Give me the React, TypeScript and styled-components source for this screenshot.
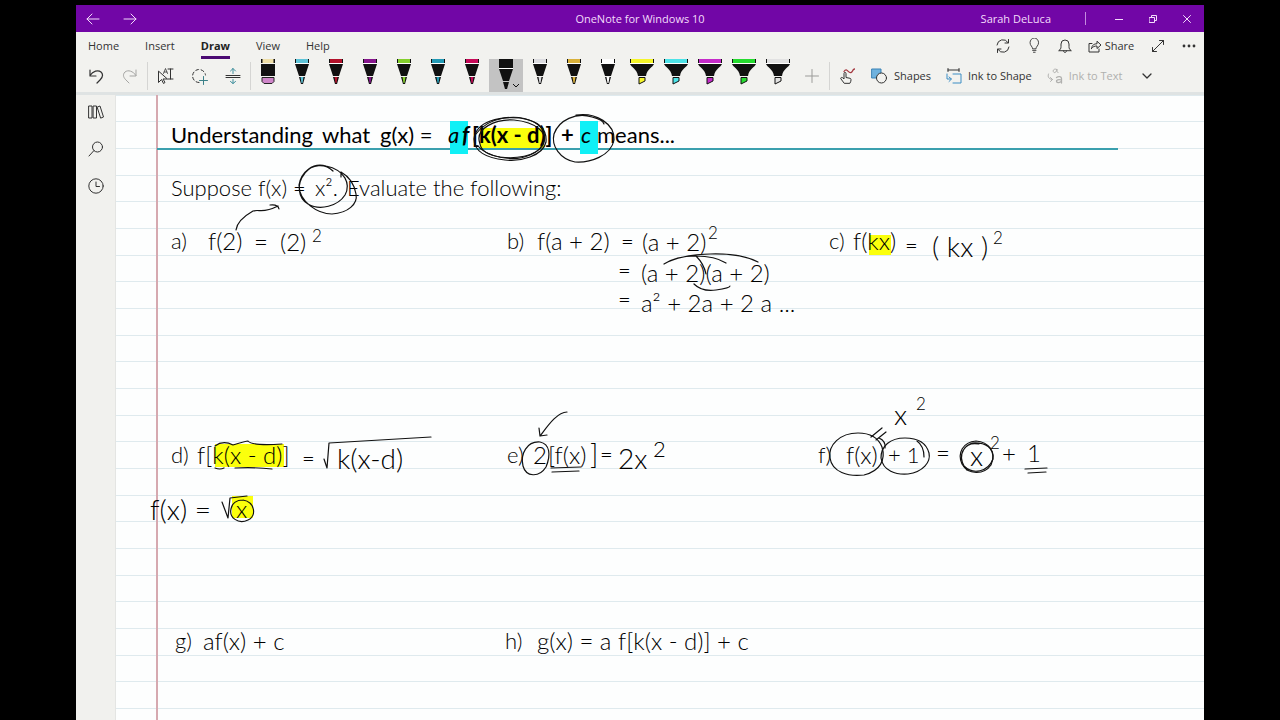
import React from "react";
import styled, { createGlobalStyle, css } from "styled-components";

const GlobalStyle = createGlobalStyle`
  * { box-sizing: border-box; }
  body { margin: 0; background: #000; }
  button { font: inherit; color: inherit; background: none; border: 0; padding: 0; margin: 0; }
`;

const uiFont = `"Open Sans", "Noto Sans", sans-serif`;
const noteFont = `Lato, "Open Sans", sans-serif`;

/* ---------- window frame ---------- */

const Screen = styled.div`
  min-height: 100vh;
  padding: 5px 76px 0;
  background: #000;
  display: flex;
  flex-direction: column;
  font-family: ${uiFont};
  font-size: 11px;
  color: #333;
`;

const TitleBar = styled.header`
  display: grid;
  grid-template-columns: 1fr auto 1fr;
  align-items: center;
  height: 27px;
  background: #7106a6;
  color: #f3dcfb;
`;

const NavButtons = styled.nav`
  display: flex;
  gap: 21px;
  padding-left: 9px;
`;

const IconButton = styled.button`
  display: flex;
  align-items: center;
  justify-content: center;
  width: 16px;
  height: 24px;
`;

const WindowControls = styled.div`
  display: flex;
  align-items: center;
  justify-content: flex-end;
`;

const TitleDivider = styled.span`
  width: 1px;
  height: 13px;
  margin: 0 16px 0 34px;
  background: #c48be0;
`;

const WindowButton = styled(IconButton)`
  width: 34px;
`;

const Ribbon = styled.div`
  background: #f2f2ef;
  border-bottom: 3px solid #dfe3e3;
`;

const TabRow = styled.div`
  display: flex;
  align-items: stretch;
  justify-content: space-between;
  height: 27px;
  padding-left: 12px;
`;

const Tabs = styled.nav`
  display: flex;
  gap: 26px;
`;

const Tab = styled.button<{ $active?: boolean }>`
  display: flex;
  align-items: center;
  border-bottom: 3px solid transparent;
  padding-top: 3px;
  ${(p) =>
    p.$active &&
    css`
      font-weight: 700;
      color: #222;
      border-bottom-color: #4b0a72;
    `}
`;

const TabActions = styled.div`
  display: flex;
  align-items: center;
`;

const ActionButton = styled.button<{ $wide?: boolean }>`
  display: flex;
  align-items: center;
  justify-content: center;
  gap: 3px;
  width: ${(p) => (p.$wide ? "62px" : "31px")};
  height: 24px;
`;

const ToolRow = styled.div`
  display: flex;
  height: 33px;
  padding-left: 3px;
`;

const Tool = styled.button<{ $selected?: boolean }>`
  position: relative;
  display: flex;
  align-items: center;
  justify-content: center;
  flex: none;
  width: 34px;
  height: 33px;
  background: ${(p) => (p.$selected ? "#c3c3c3" : "transparent")};
`;

const PenTool = styled(Tool)`
  align-items: flex-start;
`;

const SelectedMark = styled.svg`
  position: absolute;
  right: 3px;
  bottom: 3px;
`;

const Divider = styled.span`
  flex: none;
  width: 1px;
  height: 28px;
  margin-top: 3px;
  background: #d5d5d3;
`;

const LabelTool = styled.button<{ $disabled?: boolean }>`
  display: flex;
  align-items: center;
  gap: 6px;
  height: 33px;
  margin-left: 7px;
  margin-right: 8px;
  color: ${(p) => (p.$disabled ? "#b0b0ae" : "#333")};
`;

/* ---------- page ---------- */

const Body = styled.div`
  display: flex;
  flex: 1;
`;

const Rail = styled.aside`
  display: flex;
  flex-direction: column;
  align-items: center;
  gap: 13px;
  flex: none;
  width: 40px;
  padding-top: 5px;
  background: #f1f1ee;
  border-right: 1px solid #e4e5e3;
`;

const Canvas = styled.main`
  position: relative;
  flex: 1;
  min-height: 625px;
  overflow: hidden;
  background:
    linear-gradient(#d6a9b0, #d6a9b0) 40px 0 / 2px 100% no-repeat,
    linear-gradient(
        to bottom,
        #dfeaee 0 1px,
        transparent 1px 26px,
        #dfeaee 26px 27px,
        transparent 27px 53px,
        #dfeaee 53px 54px,
        transparent 54px 80px
      )
      0 0 / 100% 80px repeat-y,
    #fdfefe;
`;

const TitleRule = styled.div`
  position: absolute;
  left: 41px;
  right: 86px;
  top: 53px;
  height: 2px;
  background: #3aa0ae;
`;

const Highlight = styled.span<{ $x: number; $y: number; $w: number; $h: number; $c: string }>`
  position: absolute;
  left: ${(p) => p.$x}px;
  top: ${(p) => p.$y}px;
  width: ${(p) => p.$w}px;
  height: ${(p) => p.$h}px;
  background: ${(p) => p.$c};
`;

type Size = "small" | "normal" | "large" | "huge";
const sizes: Record<Size, number> = { small: 17, normal: 22, large: 24, huge: 28 };

const Note = styled.span<{ $x: number; $y: number; $size?: Size; $weight?: number; $italic?: boolean }>`
  position: absolute;
  left: ${(p) => p.$x}px;
  top: ${(p) => p.$y}px;
  white-space: pre;
  font-family: ${noteFont};
  font-size: ${(p) => sizes[p.$size ?? "normal"]}px;
  font-weight: ${(p) => p.$weight ?? 300};
  font-style: ${(p) => (p.$italic ? "italic" : "normal")};
  line-height: 26px;
  color: #000;
`;

const InkLayer = styled.svg`
  position: absolute;
  left: 0;
  top: 0;
  fill: none;
  stroke: #111;
  stroke-width: 1.2;
  stroke-linecap: round;
  stroke-linejoin: round;
`;

/* ---------- icons ---------- */

const Icon = ({ children, w = 16, h = 16, sw = 1 }: { children: React.ReactNode; w?: number; h?: number; sw?: number }) => (
  <svg width={w} height={h} viewBox={`0 0 ${w} ${h}`} fill="none" stroke="currentColor" strokeWidth={sw} strokeLinecap="round" strokeLinejoin="round" aria-hidden="true">
    {children}
  </svg>
);

const Pen = ({ color, selected }: { color: string; selected?: boolean }) => (
  <svg width="16" height={selected ? 31 : 26} viewBox={selected ? "0 -5 16 31" : "0 0 16 26"} aria-hidden="true">
    <rect x="1" y={selected ? -5 : 0} width="14" height={selected ? 9 : 4} fill="#111" />
    {!selected && <rect x="2" y="0" width="12" height="4" fill={color} />}
    <rect x="1" y="4" width="14" height="1" fill="#fff" />
    <path d="M1 5h14l-4 12H5z" fill="#111" />
    <path d="M5 18h6l-2 7H7z" fill="#111" />
    {!selected && <path d="M6.5 18h3l-1 6h-1z" fill={color} />}
  </svg>
);

const Highlighter = ({ color }: { color: string }) => (
  <svg width="26" height="26" viewBox="0 0 26 26" aria-hidden="true">
    <rect x="1" y="0" width="24" height="4" fill="#111" />
    <rect x="2" y="0" width="22" height="4" fill={color} />
    <rect x="1" y="4" width="24" height="1" fill="#fff" />
    <path d="M1 5h24c-1 3-7 5-8 12H9C8 10 2 8 1 5z" fill="#111" />
    <path d="M10 18.500h6v3.500l-6 3z" fill={color} stroke="#111" strokeWidth="1" />
  </svg>
);

const Eraser = () => (
  <svg width="16" height="26" viewBox="0 0 16 26" aria-hidden="true">
    <rect x="1" y="0" width="14" height="4" fill="#111" />
    <rect x="2.500" y="0" width="11" height="4" fill="#efdfa8" />
    <rect x="1" y="5" width="14" height="12" fill="#111" />
    <path d="M2 18.500h12v4l-2 2H4l-2-2z" fill="#cf86c9" stroke="#222" />
  </svg>
);

const pens = ["#5fc4d8", "#b3122b", "#86168c", "#84cf2c", "#239ab5", "#c70a58"];
const pensAfter = ["#dcdce0", "#d9b13a", "#ffffff"];
const highlighters = ["#f5f52a", "#4de3e8", "#c52bc9", "#25db2f", "#e2e2e2"];

/* ---------- page content ---------- */

const yellow = "#fbff0c";
const cyan = "#10f0f6";

const highlights = [
  { x: 334, y: 26, w: 18, h: 33, c: cyan },
  { x: 364, y: 33, w: 64, h: 20, c: yellow },
  { x: 464, y: 26, w: 18, h: 33, c: cyan },
  { x: 753, y: 140, w: 22, h: 20, c: yellow },
  { x: 99, y: 349, w: 69, h: 23, c: yellow },
  { x: 116, y: 401, w: 21, h: 22, c: yellow },
];

type Item = { t: string; x: number; y: number; s?: Size; w?: number; i?: boolean };

const heading: Item[] = [
  { t: "Understanding", x: 55, y: 27, w: 400 },
  { t: "what", x: 206, y: 27, w: 400 },
  { t: "g(x) =", x: 264, y: 27, w: 400 },
  { t: "a", x: 332, y: 27, w: 400, i: true },
  { t: "f", x: 346, y: 27, w: 700, i: true },
  { t: "[k(x - d)]", x: 356, y: 27, w: 700 },
  { t: "+", x: 445, y: 27, w: 700 },
  { t: "c", x: 465, y: 27, w: 400, i: true },
  { t: "means...", x: 481, y: 27, w: 400 },
];

const typed: Item[] = [
  { t: "Suppose f(x) =", x: 55, y: 80 },
  { t: "x².", x: 199, y: 80 },
  { t: "Evaluate the following:", x: 231, y: 80 },
  { t: "a)", x: 55, y: 133 },
  { t: "f(2)", x: 92, y: 133, s: "large" },
  { t: "b)", x: 391, y: 133 },
  { t: "f(a + 2)", x: 421, y: 133, s: "large" },
  { t: "c)", x: 713, y: 133 },
  { t: "f(kx)", x: 737, y: 133, s: "large" },
  { t: "d)", x: 55, y: 347 },
  { t: "f[k(x - d)]", x: 81, y: 347, s: "large" },
  { t: "e)", x: 391, y: 347 },
  { t: "2", x: 417, y: 347, s: "large" },
  { t: "[f(x)", x: 432, y: 347, s: "large" },
  { t: "f)", x: 702, y: 347 },
  { t: "f(x)", x: 730, y: 347, s: "large" },
  { t: "+ 1", x: 772, y: 347 },
  { t: "g)", x: 59, y: 533 },
  { t: "af(x) + c", x: 87, y: 533, s: "large" },
  { t: "h)", x: 389, y: 533 },
  { t: "g(x) = a f[k(x - d)] + c", x: 421, y: 533, s: "large" },
];

const handwriting: Item[] = [
  { t: "=", x: 138, y: 134, s: "large" },
  { t: "(2)", x: 164, y: 134, s: "large" },
  { t: "2", x: 196, y: 128, s: "small" },
  { t: "=", x: 505, y: 133 },
  { t: "(a + 2)", x: 526, y: 134, s: "large" },
  { t: "2", x: 592, y: 125, s: "small" },
  { t: "=", x: 502, y: 162 },
  { t: "(a + 2)(a + 2)", x: 525, y: 165, s: "large" },
  { t: "=", x: 502, y: 191 },
  { t: "a² + 2a + 2 a ...", x: 525, y: 195, s: "large" },
  { t: "=", x: 789, y: 137 },
  { t: "( kx )", x: 816, y: 138, s: "huge" },
  { t: "2", x: 877, y: 130, s: "small" },
  { t: "=", x: 186, y: 350 },
  { t: "k(x-d)", x: 221, y: 350, s: "huge" },
  { t: "f(x) =", x: 34, y: 401, s: "huge" },
  { t: "x", x: 120, y: 401, s: "large" },
  { t: "]", x: 474, y: 345, s: "huge" },
  { t: "=", x: 484, y: 346 },
  { t: "2x", x: 502, y: 350, s: "huge" },
  { t: "2", x: 537, y: 341, s: "normal" },
  { t: "x", x: 778, y: 306, s: "huge" },
  { t: "2", x: 800, y: 296, s: "small" },
  { t: "=", x: 820, y: 345, s: "large" },
  { t: "x", x: 854, y: 347, s: "huge" },
  { t: "2", x: 874, y: 335, s: "small" },
  { t: "+", x: 886, y: 345, s: "large" },
  { t: "1", x: 911, y: 345, s: "large" },
];

const strokes = [
  // loops round k(x - d) in the title
  "M474 139C476 121 500 116 520 118 540 121 547 130 546 142 543 156 520 162 505 160 486 158 474 151 474 139",
  "M480 144C474 128 496 119 514 120 536 122 549 133 543 145 536 157 514 159 500 157 488 155 481 150 480 144",
  "M476 134C488 117 516 113 534 122 552 132 544 150 530 155 512 163 486 156 478 146",
  // loop round + c
  "M576 115C596 112 615 124 614 140 611 156 590 163 575 162 560 159 551 146 554 134 559 120 576 112 592 117Q603 120 604 124",
  // loops round x²
  "M333 171C325 163 312 164 305 173 296 184 298 198 308 204 320 211 338 206 345 195 351 184 345 170 326 166 313 162 301 172 299 185 299 202 318 214 332 214 348 213 358 204 356 194 354 182 348 176 341 172V177",
  // arrow from f(2) up to x²
  "M236 230C237 222 246 215 253 211 260 209 262 214 278 206M270 205Q278 204 279 209",
  // expansion arcs
  "M664 264C685 252 735 250 758 262M664 264C680 253 712 254 726 263M696 256Q704 264 706 274M694 284Q702 292 716 290T730 286",
  // brace and underlines in d)
  "M215 446Q223 440 233 445Q246 441 248 441Q252 446 282 444M215 468Q220 470 224 468M235 468Q255 467 272 469",
  // radicals
  "M324 459L327 468 329 443 431 437",
  "M222 502L228 518 230 498 247 496",
  "M243 500C255 502 257 516 248 520 238 525 229 517 231 509 232 503 237 500 243 500",
  // e) arrow, loop and underlines
  "M567 412C557 412 547 427 540 436M539 428L540 436 547 435",
  "M540 442C527 441 520 454 523 466 526 477 539 478 546 467 551 455 550 444 540 442",
  "M551 468L581 467M552 472L579 471",
  // f) loops, ticks and underlines
  "M858 433C840 433 828 445 830 458 832 472 848 477 864 475 880 471 886 460 882 447 878 437 870 433 858 433",
  "M905 438C890 438 881 446 881 458 883 471 896 475 908 474 923 472 931 462 929 453 926 442 916 438 905 438",
  "M871 437L882 428M876 440L886 432M879 438Q886 441 885 448M917 441Q924 446 924 457",
  "M976 441C963 442 957 453 962 464 968 475 984 475 991 465 997 451 988 442 976 441",
  "M979 444C964 441 958 455 964 466 973 475 988 472 993 459 994 448 986 442 972 443 960 448 958 460 967 470",
  "M1025 469L1047 468M1028 473L1046 472",
];

const renderItem = (n: Item, index: number) => (
  <Note key={index} $x={n.x} $y={n.y} $size={n.s} $weight={n.w} $italic={n.i}>
    {n.t}
  </Note>
);

const Heading = styled.h1`
  margin: 0;
`;

export default function App() {
  return (
    <>
      <GlobalStyle />
      <Screen>
        <TitleBar>
          <NavButtons>
            <IconButton aria-label="Back"><Icon><path d="M14 8H2M7 3L2 8l5 5" /></Icon></IconButton>
            <IconButton aria-label="Forward"><Icon><path d="M2 8h12M9 3l5 5-5 5" /></Icon></IconButton>
          </NavButtons>
          <span>OneNote for Windows 10</span>
          <WindowControls>
            <span>Sarah DeLuca</span>
            <TitleDivider />
            <WindowButton aria-label="Minimize"><Icon w={8} h={8}><path d="M0 4.500h8" /></Icon></WindowButton>
            <WindowButton aria-label="Restore"><Icon w={8} h={8}><path d="M.5 2.500h5v5h-5zM2.500 2.500v-2h5v5h-2" /></Icon></WindowButton>
            <WindowButton aria-label="Close"><Icon w={8} h={8}><path d="M.5.5l7 7M7.500.5l-7 7" /></Icon></WindowButton>
          </WindowControls>
        </TitleBar>

        <Ribbon>
          <TabRow>
            <Tabs>
              <Tab>Home</Tab>
              <Tab>Insert</Tab>
              <Tab $active>Draw</Tab>
              <Tab>View</Tab>
              <Tab>Help</Tab>
            </Tabs>
            <TabActions>
              <ActionButton aria-label="Sync"><Icon><path d="M2 7a6 6 0 0 1 11-2.500M14 9a6 6 0 0 1-11 2.500M13.500 1.500v3.500H10M2.500 14.500V11H6" /></Icon></ActionButton>
              <ActionButton aria-label="Tell me"><Icon><path d="M6 11c0-2-3-3-3-6a5 5 0 0 1 10 0c0 3-3 4-3 6zM6 13h4M7 15h2" transform="translate(1.500 0) scale(.85 .95)" /></Icon></ActionButton>
              <ActionButton aria-label="Notifications"><Icon><path d="M2 12.500c1.500-1 2-2 2-4V6a4 4 0 0 1 8 0v2.500c0 2 .5 3 2 4zM6.500 13c0 2 3 2 3 0" /></Icon></ActionButton>
              <ActionButton $wide>
                <Icon w={14} h={14}><path d="M4 4.500H1v8.500h10v-3M3.500 9.500C4 6 6 4.800 9 4.800V2.200L13 6 9 9.500V7C6.500 7 5 7.500 3.500 9.500z" /></Icon>
                Share
              </ActionButton>
              <ActionButton aria-label="Full screen"><Icon w={14} h={14}><path d="M1.500 12.500l11-11M8.500 1.500h4v4M1.500 8.500v4h4" /></Icon></ActionButton>
              <ActionButton aria-label="More"><Icon><g fill="currentColor" stroke="none"><circle cx="3" cy="8" r="1.400" /><circle cx="8" cy="8" r="1.400" /><circle cx="13" cy="8" r="1.400" /></g></Icon></ActionButton>
            </TabActions>
          </TabRow>

          <ToolRow>
            <Tool aria-label="Undo"><Icon sw={1.2}><path d="M2 2v6h6M2 7.500C5 3 10 1.500 13 4c3 3 1 6-1 8l-3 3" /></Icon></Tool>
            <Tool aria-label="Redo"><Icon><g stroke="#a5a5a3"><path d="M14 2v6H8M14 7.500C11 3 6 1.500 3 4 0 7 2 10 4 12l3 3" /></g></Icon></Tool>
            <Divider />
            <Tool aria-label="Select objects or text">
              <Icon w={18} h={18}>
                <path d="M2.500 4.500v11l3-3 2 4 1.500-1-2-3.500h4z" /><path d="M12 2h5M12 12h5M14.500 2v10" /><path d="M7.500 6.500l2-5 2 5M8.200 5h2.600" strokeWidth=".8" />
              </Icon>
            </Tool>
            <Tool aria-label="Lasso select">
              <Icon w={18} h={18}><path d="M9 15.500A6.500 6.500 0 1 1 15.500 8" strokeDasharray="3 2.500" /><path d="M13.500 9.500v8M9.500 13.500h8" stroke="#3b8188" /></Icon>
            </Tool>
            <Tool aria-label="Insert space">
              <Icon><path d="M1 7.500h14M1 9.500h14" /><path d="M8 5.500v-5M5.500 3L8 .5 10.500 3M8 11.500v4M5.500 13.500L8 15.500l2.500-2" stroke="#3e8e9c" /></Icon>
            </Tool>
            <Divider />
            <PenTool aria-label="Eraser"><Eraser /></PenTool>
            {pens.map((c) => <PenTool key={c} aria-label="Pen"><Pen color={c} /></PenTool>)}
            <PenTool $selected aria-label="Black pen">
              <Pen color="#111" selected />
              <SelectedMark width="8" height="6" viewBox="0 0 8 6" fill="none" stroke="#111"><path d="M1 1l3 3 3-3" /></SelectedMark>
            </PenTool>
            {pensAfter.map((c) => <PenTool key={c} aria-label="Pen"><Pen color={c} /></PenTool>)}
            {highlighters.map((c) => <PenTool key={c} aria-label="Highlighter"><Highlighter color={c} /></PenTool>)}
            <Tool aria-label="Add pen"><Icon><path d="M8 1.500v13M1.500 8h13" stroke="#9b9b99" /></Icon></Tool>
            <Divider />
            <Tool aria-label="Draw with touch">
              <Icon><path d="M5 15l-3-4c-1-1.500 1-2 2-1l1 1V5.500c0-1.500 2-1.500 2 0v4l4 .8c1 .2 1 1 1 1.700 0 1.500-.5 2-1 3z" /><path d="M5 3.500C8-1 9 5.500 12 4.500c2-.5 1-3 3.500-3.500" stroke="#a4373f" strokeWidth="1.300" /></Icon>
            </Tool>
            <LabelTool>
              <Icon w={17}><path d="M1 1h9v4L5 10H1z" fill="#6fb2de" stroke="#3b82b5" /><circle cx="10.500" cy="10" r="5" fill="#f2f2ef" /></Icon>
              Shapes
            </LabelTool>
            <LabelTool>
              <Icon><path d="M2 2h11M2 .5v3M13 .5v3" /><path d="M7 6h8v9H7M1 6v5h4M3 9l2.500 2L3 13.500" stroke="#3b8dc4" /></Icon>
              Ink to Shape
            </LabelTool>
            <LabelTool $disabled disabled>
              <Icon><path d="M10 1.500C7 0 5.500 2.500 6.500 4s3 0 3.500-2.500c-.2 2 0 3 1 3M1.500 6c-1 3 0 5 4 5.500M3.500 9.500l2 2-2 2" /><path d="M9.500 9.500c2-1.500 5-1 5 1V15M14.500 12c-3-1-5.500 0-5 1.500s4 1.500 5-.5" strokeWidth="1.300" /></Icon>
              Ink to Text
            </LabelTool>
            <Tool aria-label="More tools"><Icon w={10} h={6} sw={1.3}><path d="M1 1l4 4 4-4" /></Icon></Tool>
          </ToolRow>
        </Ribbon>

        <Body>
          <Rail>
            <IconButton aria-label="Notebooks"><Icon><path d="M1 2h3v12H1zM5.500 2h3v12h-3zM9.500 3l2.500-1 3.500 11-2.500 1z" /></Icon></IconButton>
            <IconButton aria-label="Search"><Icon><circle cx="9.500" cy="6" r="5" /><path d="M6 9.500L1 15" /></Icon></IconButton>
            <IconButton aria-label="Recent notes"><Icon><circle cx="8" cy="8" r="7.200" /><path d="M8 4v4.500h3.500" /></Icon></IconButton>
          </Rail>
          <Canvas>
            <TitleRule />
            {highlights.map((h, i) => (
              <Highlight key={i} $x={h.x} $y={h.y} $w={h.w} $h={h.h} $c={h.c} />
            ))}
            <Heading>{heading.map(renderItem)}</Heading>
            {typed.map(renderItem)}
            {handwriting.map(renderItem)}
            <InkLayer width="1088" height="625" viewBox="116 95 1088 625" aria-hidden="true">
              {strokes.map((d, i) => <path key={i} d={d} />)}
            </InkLayer>
          </Canvas>
        </Body>
      </Screen>
    </>
  );
}
